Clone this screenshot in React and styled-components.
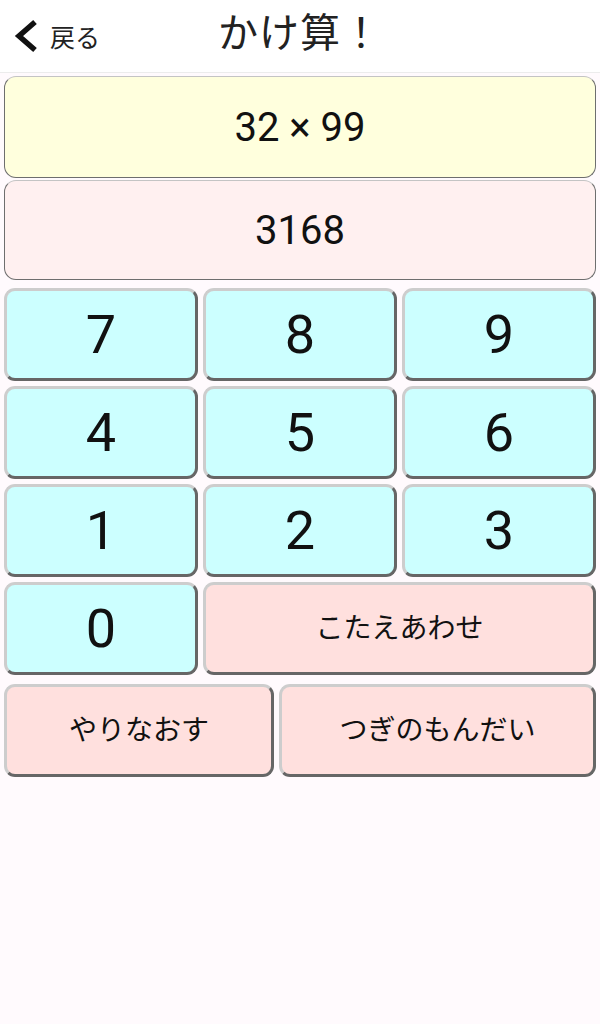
import React from 'react';
import styled, { createGlobalStyle } from 'styled-components';

const GlobalStyle = createGlobalStyle`
  html, body {
    margin: 0;
    padding: 0;
    background: #fffafd;
  }
  body {
    font-family: Roboto, "Noto Sans CJK JP", sans-serif;
    color: #111;
  }
`;

const Page = styled.div`
  width: 600px;
  min-height: 1024px;
  background: #fffafd;
`;

const Header = styled.header`
  position: relative;
  height: 72px;
  background: #fff;
  border-bottom: 1px solid #ececec;
  display: flex;
  align-items: center;
  justify-content: center;
`;

const BackButton = styled.button`
  position: absolute;
  left: 13px;
  top: 18px;
  display: flex;
  align-items: center;
  gap: 11px;
  background: none;
  border: none;
  padding: 0;
  font-family: "Noto Sans CJK JP", sans-serif;
  font-size: 25px;
  color: #222;
`;

const Title = styled.h1`
  margin: 0;
  margin-top: -12px;
  font-family: "Noto Sans CJK JP", sans-serif;
  font-weight: 400;
  font-size: 40px;
  color: #222;
  letter-spacing: 1px;
`;

const Content = styled.main`
  display: flex;
  flex-direction: column;
  padding: 3px 4px 0;
`;

const Display = styled.div`
  height: ${(p) => p.h}px;
  box-sizing: border-box;
  margin-bottom: 2px;
  border-radius: 12px;
  border: 1.5px solid #6e6e6e;
  border-top-color: #c4c4c4;
  background: ${(p) => p.bg};
  display: flex;
  align-items: center;
  justify-content: center;
  font-family: Roboto, sans-serif;
  font-size: 40px;
  color: #111;
`;

const Keypad = styled.div`
  display: grid;
  grid-template-columns: repeat(3, 1fr);
  grid-auto-rows: 93px;
  gap: 5px;
  margin-top: 6px;
`;

const ActionRow = styled.div`
  display: grid;
  grid-template-columns: 270px 1fr;
  height: 93px;
  gap: 5px;
  margin-top: 9px;
`;

const Key = styled.button`
  box-sizing: border-box;
  grid-column: ${(p) => p.span || 'auto'};
  margin: 0;
  padding: 0 0 ${(p) => (p.action ? '6px' : '0')};
  border-radius: 11px;
  border: 3px solid;
  border-color: #cdcdcd #666 #666 #cdcdcd;
  background: ${(p) => (p.action ? '#ffe0de' : '#ccffff')};
  color: #111;
  font-family: ${(p) => (p.action ? '"Noto Sans CJK JP", sans-serif' : 'Roboto, sans-serif')};
  font-size: ${(p) => (p.action ? '28px' : '54px')};
  display: flex;
  align-items: center;
  justify-content: center;
`;

const Chevron = () => (
  <svg width="26" height="34" viewBox="0 0 26 34">
    <path d="M22 3 L6 17 L22 31" fill="none" stroke="#111" strokeWidth="5.5" />
  </svg>
);

export default function App() {
  const digits = ['7', '8', '9', '4', '5', '6', '1', '2', '3'];
  return (
    <Page>
      <GlobalStyle />
      <Header>
        <BackButton>
          <Chevron />
          戻る
        </BackButton>
        <Title>かけ算！</Title>
      </Header>
      <Content>
        <Display h={102} bg="#ffffdd">32 × 99</Display>
        <Display h={100} bg="#fff0f0">3168</Display>
        <Keypad>
          {digits.map((d) => (
            <Key key={d}>{d}</Key>
          ))}
          <Key>0</Key>
          <Key action span="2 / 4">こたえあわせ</Key>
        </Keypad>
        <ActionRow>
          <Key action>やりなおす</Key>
          <Key action>つぎのもんだい</Key>
        </ActionRow>
      </Content>
    </Page>
  );
}
